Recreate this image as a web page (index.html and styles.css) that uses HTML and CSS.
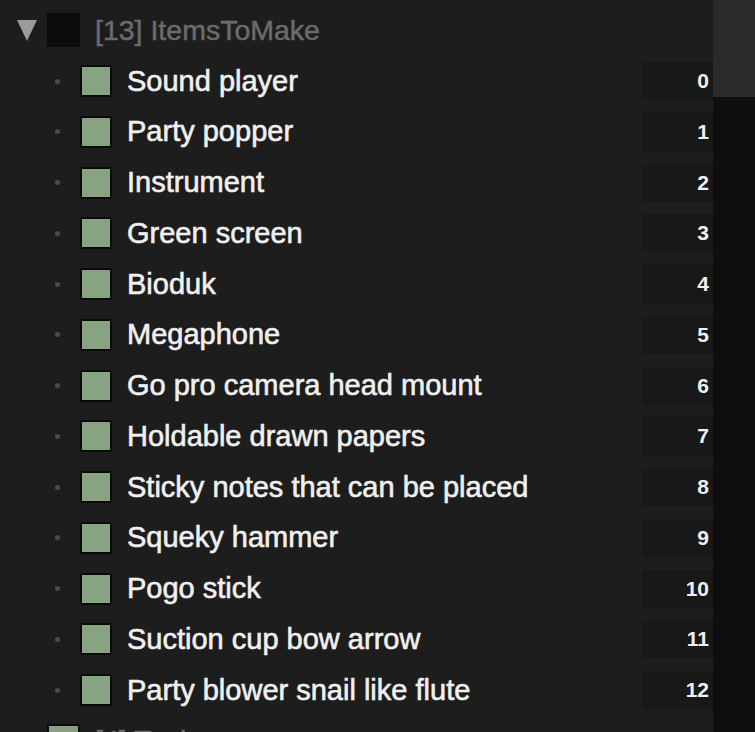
FILE: index.html
```html
<!DOCTYPE html>
<html>
<head>
<meta charset="utf-8">
<link rel="stylesheet" href="styles.css">
</head>
<body>
<div class="panel">
  <div class="list">
    <div class="group-header">
      <span class="caret"></span>
      <span class="swatch swatch-dark"></span>
      <span class="group-title">[13] ItemsToMake</span>
    </div>
    <div class="item"><span class="dot"></span><span class="box"></span><span class="label">Sound player</span><span class="index">0</span></div>
    <div class="item"><span class="dot"></span><span class="box"></span><span class="label">Party popper</span><span class="index">1</span></div>
    <div class="item"><span class="dot"></span><span class="box"></span><span class="label">Instrument</span><span class="index">2</span></div>
    <div class="item"><span class="dot"></span><span class="box"></span><span class="label">Green screen</span><span class="index">3</span></div>
    <div class="item"><span class="dot"></span><span class="box"></span><span class="label">Bioduk</span><span class="index">4</span></div>
    <div class="item"><span class="dot"></span><span class="box"></span><span class="label">Megaphone</span><span class="index">5</span></div>
    <div class="item"><span class="dot"></span><span class="box"></span><span class="label">Go pro camera head mount</span><span class="index">6</span></div>
    <div class="item"><span class="dot"></span><span class="box"></span><span class="label">Holdable drawn papers</span><span class="index">7</span></div>
    <div class="item"><span class="dot"></span><span class="box"></span><span class="label">Sticky notes that can be placed</span><span class="index">8</span></div>
    <div class="item"><span class="dot"></span><span class="box"></span><span class="label">Squeky hammer</span><span class="index">9</span></div>
    <div class="item"><span class="dot"></span><span class="box"></span><span class="label">Pogo stick</span><span class="index">10</span></div>
    <div class="item"><span class="dot"></span><span class="box"></span><span class="label">Suction cup bow arrow</span><span class="index">11</span></div>
    <div class="item"><span class="dot"></span><span class="box"></span><span class="label">Party blower snail like flute</span><span class="index">12</span></div>
    <div class="group-header">
      <span class="caret caret-hidden"></span>
      <span class="swatch swatch-green"></span>
      <span class="group-title">[4] Tools</span>
    </div>
  </div>
  <div class="scrollbar"><div class="thumb"></div></div>
</div>
</body>
</html>
```
FILE: styles.css
```css
html, body {
  margin: 0;
  padding: 0;
  background: #1c1c1c;
  overflow: hidden;
}
.panel {
  display: flex;
  width: 755px;
  height: 732px;
  overflow: hidden;
  font-family: "Liberation Sans", Arial, sans-serif;
}
.list {
  width: 713px;
  flex: none;
  padding-top: 5px;
  background: #1d1d1d;
}
.group-header {
  display: flex;
  align-items: center;
  height: 50.75px;
}
.caret {
  width: 0;
  height: 0;
  margin-left: 17px;
  border-left: 10.5px solid transparent;
  border-right: 10.5px solid transparent;
  border-top: 21px solid #9a9a9a;
}
.caret-hidden {
  border-top-color: transparent;
}
.swatch {
  width: 33px;
  height: 34px;
  margin-left: 10px;
  box-sizing: border-box;
}
.swatch-dark {
  background: #0b0b0b;
}
.swatch-green {
  background: #87a281;
  border: 2px solid #0b0b0b;
}
.group-title {
  margin-left: 15px;
  font-size: 28.5px;
  color: #6b6b6b;
  -webkit-text-stroke: 0.5px #6b6b6b;
}
.item {
  display: flex;
  align-items: center;
  height: 50.75px;
}
.dot {
  width: 5px;
  height: 5px;
  margin-left: 55px;
  background: #4c4c4c;
  border-radius: 50%;
}
.box {
  width: 32px;
  height: 32px;
  margin-left: 20px;
  box-sizing: border-box;
  background: #88a382;
  border: 2px solid #0a0a0a;
}
.label {
  margin-left: 15px;
  font-size: 29px;
  color: #f0f0f0;
  -webkit-text-stroke: 0.6px #f0f0f0;
  white-space: nowrap;
}
.index {
  margin-left: auto;
  width: 71px;
  height: 38px;
  box-sizing: border-box;
  padding-right: 4px;
  background: #181818;
  color: #f0f0f0;
  font-size: 21px;
  font-weight: bold;
  text-align: right;
  line-height: 38px;
}
.scrollbar {
  flex: 1;
  background: #0e0e0e;
}
.thumb {
  height: 97px;
  background: #2a2a2a;
}
```
